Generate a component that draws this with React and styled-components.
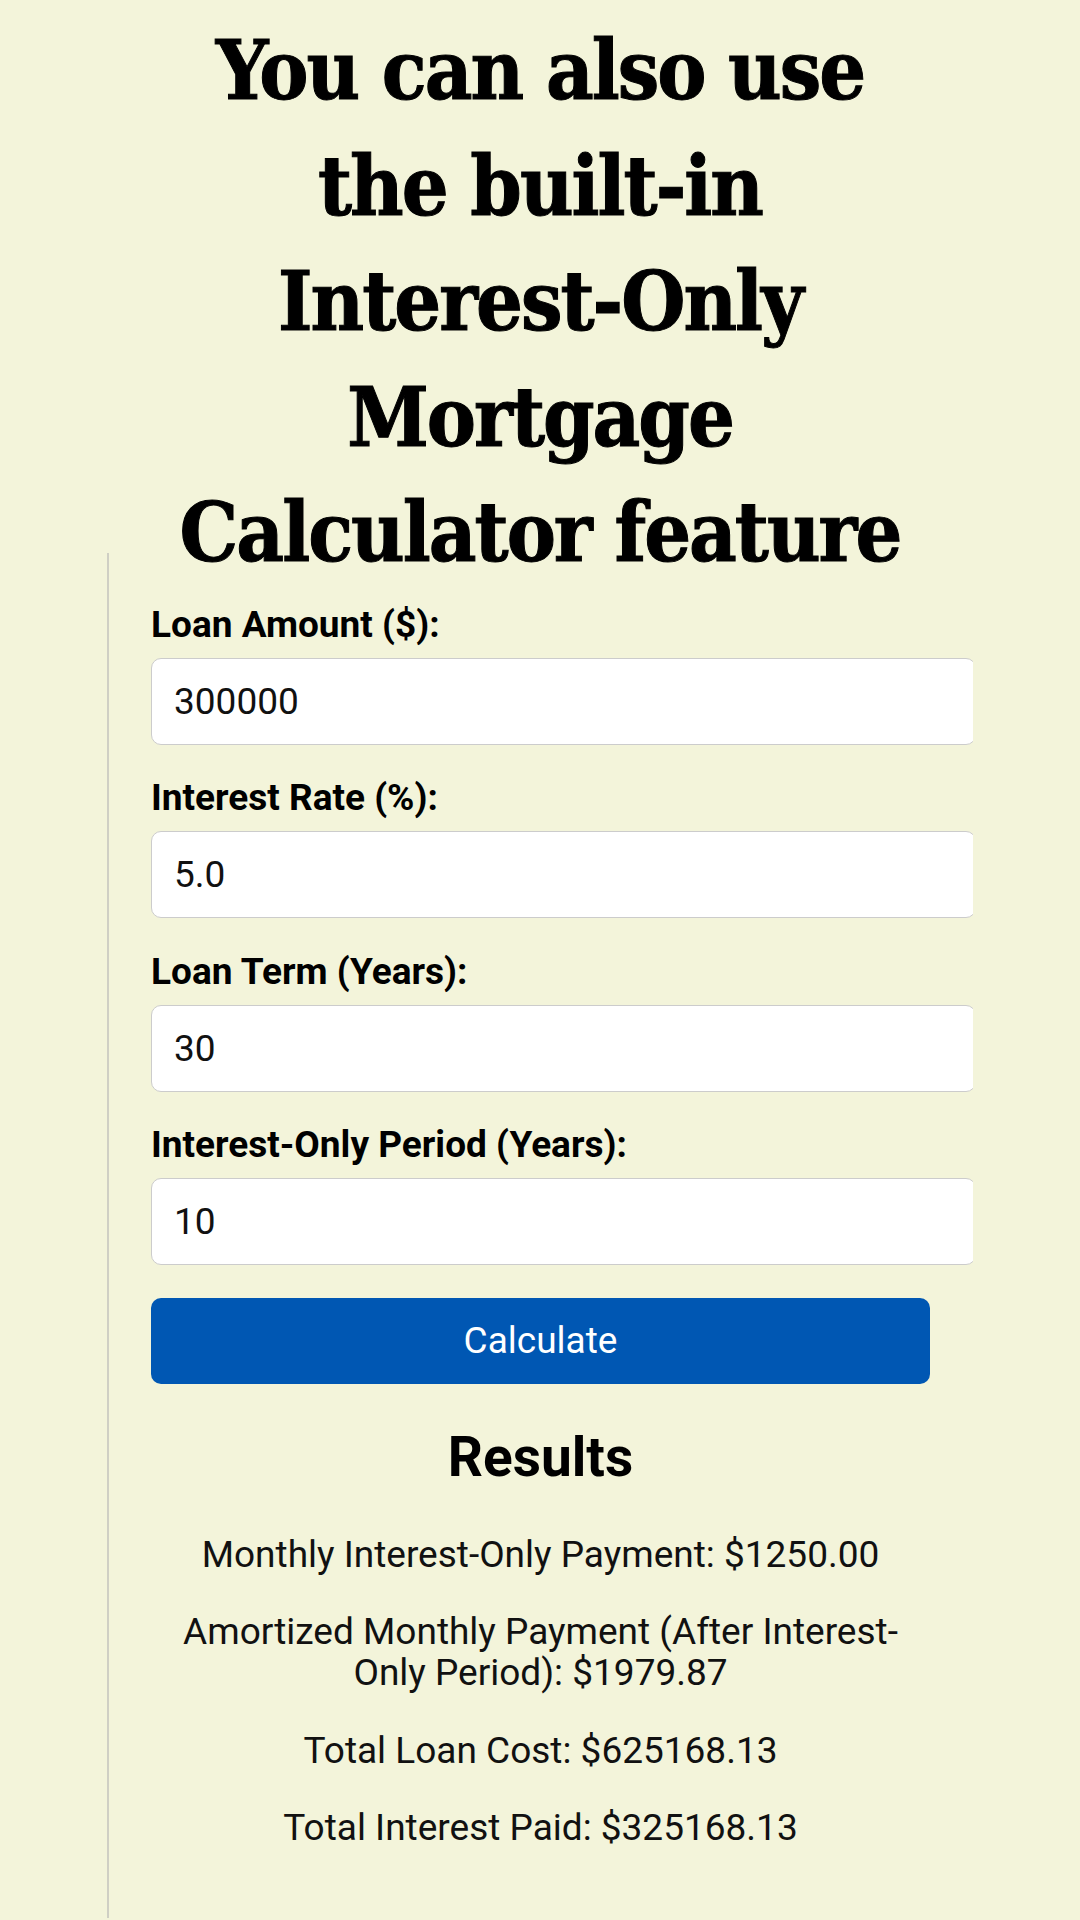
import React from "react";
import styled, { createGlobalStyle } from "styled-components";

const GlobalStyle = createGlobalStyle`
  html, body {
    margin: 0;
    padding: 0;
    background: #f3f4da;
  }
  body {
    font-family: Roboto, "Liberation Sans", sans-serif;
    color: #000;
  }
`;

const Page = styled.div`
  width: 1080px;
  min-height: 1920px;
  background: #f3f4da;
  overflow: hidden;
`;

const Title = styled.h1`
  position: relative;
  z-index: 1;
  margin: 0 0 -38px;
  padding-top: 13px;
  font-family: "DejaVu Serif", serif;
  font-stretch: condensed;
  font-weight: 700;
  font-size: 82px;
  letter-spacing: -2px;
  line-height: 115.5px;
  text-align: center;
  color: #000;
  -webkit-text-stroke: 1px #000;
`;

const Card = styled.div`
  box-sizing: border-box;
  width: 866px;
  margin-left: 107px;
  padding: 51px 43px 33px 42px;
  border-left: 2px solid #cfcfc4;
  overflow: hidden;
`;

const Field = styled.div`
  margin-bottom: 32.5px;
`;

const Label = styled.label`
  display: block;
  margin-bottom: 13px;
  font-size: 37px;
  font-weight: 700;
  line-height: 41px;
`;

const Input = styled.input`
  display: block;
  width: 100%;
  box-sizing: content-box;
  margin: 0;
  padding: 22px;
  border: 1px solid #cccccc;
  border-radius: 10px;
  background: #fff;
  font-family: Roboto, sans-serif;
  font-size: 37px;
  line-height: 41px;
  height: 41px;
  color: #111;
  outline: none;
`;

const Button = styled.button`
  display: block;
  width: 100%;
  height: 86px;
  border: none;
  border-radius: 10px;
  background: #0057b3;
  color: #fff;
  font-family: Roboto, sans-serif;
  font-size: 37px;
  cursor: pointer;
`;

const Results = styled.div`
  text-align: center;
`;

const ResultsTitle = styled.h2`
  margin: 41px 0 45px;
  font-size: 55px;
  font-weight: 700;
  line-height: 64px;
`;

const Line = styled.p`
  margin: 0 0 36.5px;
  font-size: 37px;
  line-height: 41px;
  color: #111;
`;

const fields = [
  { id: "loan", label: "Loan Amount ($):", value: "300000" },
  { id: "rate", label: "Interest Rate (%):", value: "5.0" },
  { id: "term", label: "Loan Term (Years):", value: "30" },
  { id: "io", label: "Interest-Only Period (Years):", value: "10" },
];

const results = [
  "Monthly Interest-Only Payment: $1250.00",
  "Amortized Monthly Payment (After Interest-Only Period): $1979.87",
  "Total Loan Cost: $625168.13",
  "Total Interest Paid: $325168.13",
];

export default function App() {
  return (
    <Page>
      <GlobalStyle />
      <Title>
        You can also use
        <br />
        the built-in
        <br />
        Interest-Only
        <br />
        Mortgage
        <br />
        Calculator feature
      </Title>
      <Card>
        {fields.map(f => (
          <Field key={f.id}>
            <Label htmlFor={f.id}>{f.label}</Label>
            <Input id={f.id} type="text" defaultValue={f.value} />
          </Field>
        ))}
        <Button type="button">Calculate</Button>
        <Results>
          <ResultsTitle>Results</ResultsTitle>
          {results.map(r => (
            <Line key={r}>{r}</Line>
          ))}
        </Results>
      </Card>
    </Page>
  );
}
